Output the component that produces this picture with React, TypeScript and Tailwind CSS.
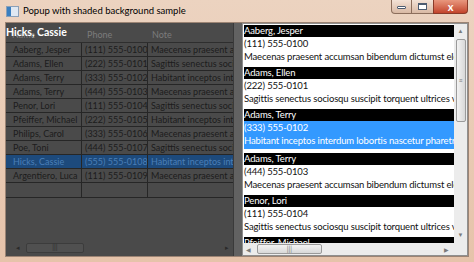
import React from "react";

const people = [
  { name: "Aaberg, Jesper", phone: "(111) 555-0100", note: "Maecenas praesent accumsan bibendum dictumst eleifend" },
  { name: "Adams, Ellen", phone: "(222) 555-0101", note: "Sagittis senectus sociosqu suscipit torquent ultrices vehicula" },
  { name: "Adams, Terry", phone: "(333) 555-0102", note: "Habitant inceptos interdum lobortis nascetur pharetra placerat" },
  { name: "Adams, Terry", phone: "(444) 555-0103", note: "Maecenas praesent accumsan bibendum dictumst eleifend" },
  { name: "Penor, Lori", phone: "(111) 555-0104", note: "Sagittis senectus sociosqu suscipit torquent ultrices vehicula" },
  { name: "Pfeiffer, Michael", phone: "(222) 555-0105", note: "Habitant inceptos interdum lobortis nascetur pharetra placerat" },
  { name: "Philips, Carol", phone: "(333) 555-0106", note: "Maecenas praesent accumsan bibendum dictumst eleifend" },
  { name: "Poe, Toni", phone: "(444) 555-0107", note: "Sagittis senectus sociosqu suscipit torquent ultrices vehicula" },
  { name: "Hicks, Cassie", phone: "(555) 555-0108", note: "Habitant inceptos interdum lobortis nascetur pharetra placerat" },
  { name: "Argentiero, Luca", phone: "(111) 555-0109", note: "Maecenas praesent accumsan bibendum dictumst eleifend" },
];

const font = { fontFamily: "Lato, 'Noto Sans', sans-serif" };

function TitleBar() {
  return (
    <div className="flex h-[22px] shrink-0 items-start">
      <div className="mt-[6px] ml-[6px] h-[11px] w-[13px] border border-[#8aa0b8] bg-[#dfe8f2]">
        <div className="h-full w-[4px] bg-[#3a7fc0]" />
      </div>
      <span className="ml-[4px] mt-[4px] text-[9.5px] leading-[14px] text-black">
        Popup with shaded background sample
      </span>
      {/* caption buttons */}
      <div className="ml-auto mr-[6px] flex h-[14px]">
        <div className="flex w-[21px] items-center justify-center rounded-bl-[4px] border border-t-0 border-[#8c6e5c] bg-gradient-to-b from-[#f3e2d6] to-[#d9b9a4]">
          <div className="mt-[2px] h-[3px] w-[9px] rounded-[1px] border border-[#4d5c70] bg-white" />
        </div>
        <div className="flex w-[21px] items-center justify-center border-b border-[#8c6e5c] bg-gradient-to-b from-[#f3e2d6] to-[#d9b9a4]">
          <div className="h-[7px] w-[9px] border border-t-2 border-[#4d5c70] bg-white" />
        </div>
        <div className="flex w-[35px] items-center justify-center rounded-br-[4px] border border-t-0 border-[#8a3a28] bg-gradient-to-b from-[#e8977e] to-[#c2432b]">
          <span className="text-[11px] font-bold leading-none text-white">x</span>
        </div>
      </div>
    </div>
  );
}

function ShadedGrid() {
  return (
    <div className="relative flex w-[227px] flex-col overflow-hidden bg-[#4a4a4a] text-[9px] leading-[13px]">
      <div className="flex h-[20px] border-b border-[#2e2e2e] text-[#7c7c7c]">
        <div className="w-[76px] pl-[6px] pt-[5px]">Name</div>
        <div className="w-[66px] pl-[5px] pt-[5px]">Phone</div>
        <div className="flex-1 pl-[4px] pt-[5px]">Note</div>
      </div>
      {people.map((p, i) => {
        const sel = p.name === "Hicks, Cassie";
        return (
          <div
            key={i}
            className={`flex h-[14px] border-b border-[#262626] whitespace-nowrap ${
              sel ? "bg-[#1d4a7c] text-[#4a7fb8]" : "text-[#1c1c1c]"
            }`}
          >
            <div className="w-[76px] overflow-hidden border-r border-[#262626] pl-[7px]">{p.name}</div>
            <div className="w-[66px] overflow-hidden border-r border-[#262626] pl-[3px]">{p.phone}</div>
            <div className="flex-1 overflow-hidden pl-[3px]">{p.note}</div>
          </div>
        );
      })}
      <div className="flex h-[15px] border-b border-[#262626]">
        <div className="w-[76px] border-r border-[#262626]" />
        <div className="w-[66px] border-r border-[#262626]" />
      </div>
      <div className="flex-1" />
      <div className="mb-[3px] flex h-[11px] items-center text-[#2a2a2a]">
        <span className="ml-[10px] text-[7px]">◂</span>
        <div className="ml-[6px] flex h-[10px] w-[58px] items-center justify-center rounded-[2px] border border-[#3c3c3c] bg-[#505050] text-[7px] text-[#2c2c2c]">
          |||
        </div>
        <span className="ml-auto mr-[4px] text-[7px]">▸</span>
      </div>
      <span className="absolute left-0 top-[2px] text-[10.5px] font-bold leading-[14px] text-white">
        Hicks, Cassie
      </span>
    </div>
  );
}

function PopupList() {
  return (
    <div className="flex min-h-0 min-w-0 flex-1 flex-col overflow-hidden border border-[#8f8f8f] bg-white">
      <div className="flex min-h-0 flex-1 overflow-hidden">
        <div className="min-w-0 flex-1 overflow-hidden pl-[1px] pt-[1px] text-[9.5px] tracking-[-0.15px] whitespace-nowrap">
          {people.slice(0, 6).map((p, i) => {
            const sel = i === 2;
            return (
              <div key={i} className="mb-[4px]">
                <div className="h-[12px] overflow-hidden bg-black leading-[12px] text-white">{p.name}</div>
                <div className={sel ? "bg-[#3399ff] pb-[2px] text-white" : "text-[#111]"}>
                  <div className="h-[13px] leading-[14px]">{p.phone}</div>
                  <div className="h-[13px] overflow-hidden leading-[13px]">{p.note}</div>
                </div>
              </div>
            );
          })}
        </div>
        {/* vertical scrollbar */}
        <div className="flex w-[13px] shrink-0 flex-col items-center bg-[#ececec] text-[#7a7a7a]">
          <span className="mt-[3px] text-[6px] leading-[8px]">▲</span>
          <div className="mt-[4px] flex h-[83px] w-[10px] items-center justify-center rounded-[2px] border border-[#9a9a9a] bg-gradient-to-r from-[#f3f3f3] to-[#d8d8d8] text-[7px]">
            ≡
          </div>
          <span className="mt-auto mb-[4px] text-[6px] leading-[8px]">▼</span>
        </div>
      </div>
      <div className="flex h-[12px] shrink-0 items-center bg-[#ececec] text-[#7a7a7a]">
        <span className="ml-[3px] text-[6px]">◀</span>
        <div className="ml-[6px] flex h-[10px] w-[65px] items-center justify-center rounded-[2px] border border-[#9a9a9a] bg-gradient-to-b from-[#f3f3f3] to-[#d8d8d8] text-[7px]">
          |||
        </div>
        <span className="ml-auto mr-[18px] text-[6px]">▶</span>
      </div>
    </div>
  );
}

export default function App() {
  return (
    <div
      className="flex h-[262px] w-[474px] flex-col overflow-hidden bg-gradient-to-b from-[#ecd3c0] to-[#e6c3aa]"
      style={font}
    >
      <TitleBar />
      <div className="mx-[5px] mb-[5px] flex min-h-0 flex-1 border border-[#9c8474]">
        <ShadedGrid />
        <div className="w-[9px] border-l border-[#3a3a3a] bg-[#626262]" />
        <PopupList />
      </div>
    </div>
  );
}
